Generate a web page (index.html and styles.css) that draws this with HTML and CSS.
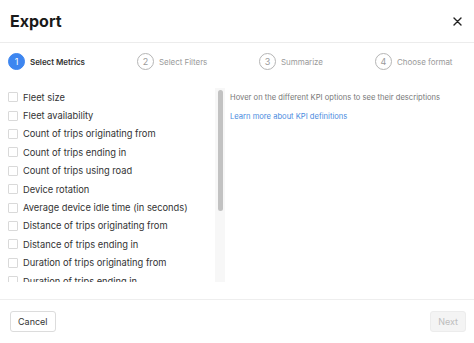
FILE: index.html
```html
<!DOCTYPE html>
<html>
<head>
<meta charset="utf-8">
<link rel="stylesheet" href="styles.css">
</head>
<body>
<div class="modal">
  <header class="head">
    <h1 class="title">Export</h1>
    <svg class="close" width="9" height="9" viewBox="0 0 9 9"><path d="M1 1L8 8M8 1L1 8" stroke="#222" stroke-width="1.4" stroke-linecap="round"/></svg>
  </header>
  <div class="steps">
    <div class="step active"><span class="num">1</span><span class="lbl">Select Metrics</span></div>
    <div class="step"><span class="num">2</span><span class="lbl">Select Filters</span></div>
    <div class="step"><span class="num">3</span><span class="lbl">Summarize</span></div>
    <div class="step"><span class="num">4</span><span class="lbl">Choose format</span></div>
  </div>
  <div class="body">
    <div class="listwrap">
      <ul class="list">
        <li><span class="cb"></span>Fleet size</li>
        <li><span class="cb"></span>Fleet availability</li>
        <li><span class="cb"></span>Count of trips originating from</li>
        <li><span class="cb"></span>Count of trips ending in</li>
        <li><span class="cb"></span>Count of trips using road</li>
        <li><span class="cb"></span>Device rotation</li>
        <li><span class="cb"></span>Average device idle time (in seconds)</li>
        <li><span class="cb"></span>Distance of trips originating from</li>
        <li><span class="cb"></span>Distance of trips ending in</li>
        <li><span class="cb"></span>Duration of trips originating from</li>
        <li><span class="cb"></span>Duration of trips ending in</li>
      </ul>
      <div class="track"><div class="thumb"></div></div>
    </div>
    <div class="info">
      <p class="hint">Hover on the different KPI options to see their descriptions</p>
      <a class="link" href="#">Learn more about KPI definitions</a>
    </div>
  </div>
  <footer class="foot">
    <button class="btn">Cancel</button>
    <button class="btn disabled">Next</button>
  </footer>
</div>
</body>
</html>
```
FILE: styles.css
```css
* { box-sizing: border-box; }
html, body { margin: 0; padding: 0; background: #fff; }
body { font-family: Inter, "Noto Sans", sans-serif; color: #333; width: 474px; height: 343px; overflow: hidden; }
.modal { display: flex; flex-direction: column; height: 343px; }
.head { height: 43px; display: flex; align-items: center; justify-content: space-between; padding: 0 12px 0 10px; border-bottom: 1px solid #ececec; }
.title { margin: 0; font-size: 16px; font-weight: 700; color: #1a1a1a; letter-spacing: 0; }
.close { display: block; }
.steps { height: 37px; display: flex; align-items: center; padding: 0 8px; }
.step { display: flex; align-items: center; gap: 5px; color: #9a9a9a; font-size: 8px; }
.step:nth-child(1) { width: 129px; }
.step:nth-child(2) { width: 122px; }
.step:nth-child(3) { width: 116px; }
.lbl { letter-spacing: -0.05px; }
.num { width: 17px; height: 17px; border-radius: 50%; border: 1px solid #b5b5b5; display: flex; align-items: center; justify-content: center; font-size: 9px; color: #9a9a9a; }
.step.active .num { background: #3d86f0; border-color: #3d86f0; color: #fff; }
.step.active .lbl { color: #333; font-weight: 600; }
.body { height: 220px; display: flex; border-bottom: 1px solid #eeeeee; padding-top: 8px; }
.listwrap { width: 225px; height: 194px; display: flex; }
.list { list-style: none; margin: 0; padding: 0 0 0 8px; flex: 1; overflow: hidden; }
.list li { height: 18.4px; display: flex; align-items: center; gap: 5px; font-size: 9.3px; color: #333; white-space: nowrap; }
.cb { width: 10px; height: 10px; border: 1px solid #d9d9d9; border-radius: 1px; flex: none; }
.track { width: 10px; background: #f7f7f7; padding: 2px 2px 0 2px; display: flex; justify-content: center; }
.thumb { width: 5px; height: 121px; background: #c2c2c2; border-radius: 3px; }
.info { padding: 4px 0 0 5px; }
.hint { margin: 0; font-size: 7.6px; color: #777; line-height: 11px; }
.link { display: block; margin-top: 8px; font-size: 7.6px; color: #4a8be0; text-decoration: none; line-height: 11px; }
.foot { flex: 1; display: flex; align-items: center; justify-content: space-between; padding: 0 8px 0 10px; }
.btn { font-family: Inter, "Noto Sans", sans-serif; font-size: 9px; height: 21px; padding: 0 7px; background: #fff; border: 1px solid #dcdcdc; border-radius: 3px; color: #333; }
.btn.disabled { background: #f4f4f4; color: #bdbdbd; border-color: #ececec; }
```
